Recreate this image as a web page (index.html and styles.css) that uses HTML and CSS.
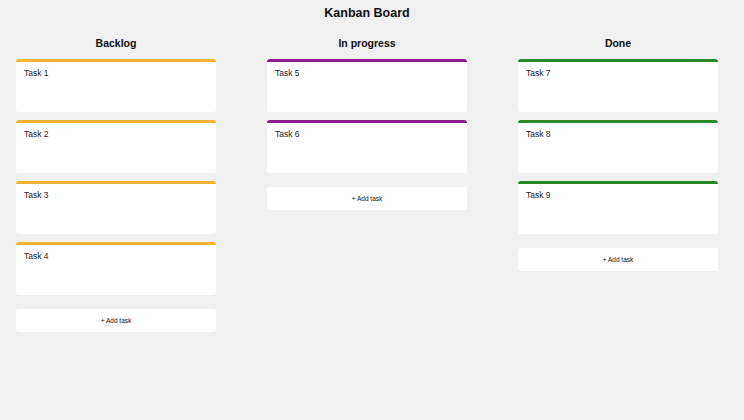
FILE: index.html
```html
<!DOCTYPE html>
<html>
<head>
<meta charset="utf-8">
<title>Kanban Board</title>
<link rel="stylesheet" href="styles.css">
</head>
<body>
<h1 class="title">Kanban Board</h1>
<div class="board">
  <section class="column col-backlog">
    <h2 class="col-title">Backlog</h2>
    <div class="card">Task 1</div>
    <div class="card">Task 2</div>
    <div class="card">Task 3</div>
    <div class="card">Task 4</div>
    <button class="add">+ Add task</button>
  </section>
  <section class="column col-progress">
    <h2 class="col-title">In progress</h2>
    <div class="card">Task 5</div>
    <div class="card">Task 6</div>
    <button class="add">+ Add task</button>
  </section>
  <section class="column col-done">
    <h2 class="col-title">Done</h2>
    <div class="card">Task 7</div>
    <div class="card">Task 8</div>
    <div class="card">Task 9</div>
    <button class="add">+ Add task</button>
  </section>
</div>
</body>
</html>
```
FILE: styles.css
```css
html, body {
  margin: 0;
  padding: 0;
  background: #f0f0f0;
  font-family: "Liberation Sans", Arial, sans-serif;
  color: #111;
}
body {
  padding-right: 10px;
}
.title {
  margin: 0;
  padding-top: 6px;
  font-size: 12.5px;
  line-height: 15px;
  font-weight: bold;
  text-align: center;
}
.board {
  display: flex;
  justify-content: center;
  gap: 51px;
  padding: 0 16px;
  margin-top: 16px;
}
.column {
  width: 200px;
  display: flex;
  flex-direction: column;
}
.col-title {
  margin: 0 0 9px 0;
  font-size: 10.5px;
  line-height: 13px;
  font-weight: bold;
  text-align: center;
}
.card {
  background: #fff;
  border-top: 3px solid #f5b334;
  border-radius: 3px;
  box-sizing: content-box;
  padding: 6px 8px 0 8px;
  height: 44px;
  margin-bottom: 8px;
  font-size: 8.5px;
  line-height: 10px;
  color: #222;
}
.col-progress .card { border-top-color: #8b1c8b; }
.col-done .card { border-top-color: #2a8a2a; }
.add {
  margin-top: 6px;
  height: 23px;
  border: none;
  border-radius: 3px;
  background: #fff;
  font-family: "Liberation Sans", Arial, sans-serif;
  font-size: 6.5px;
  color: #111;
  padding: 0;
}
```
